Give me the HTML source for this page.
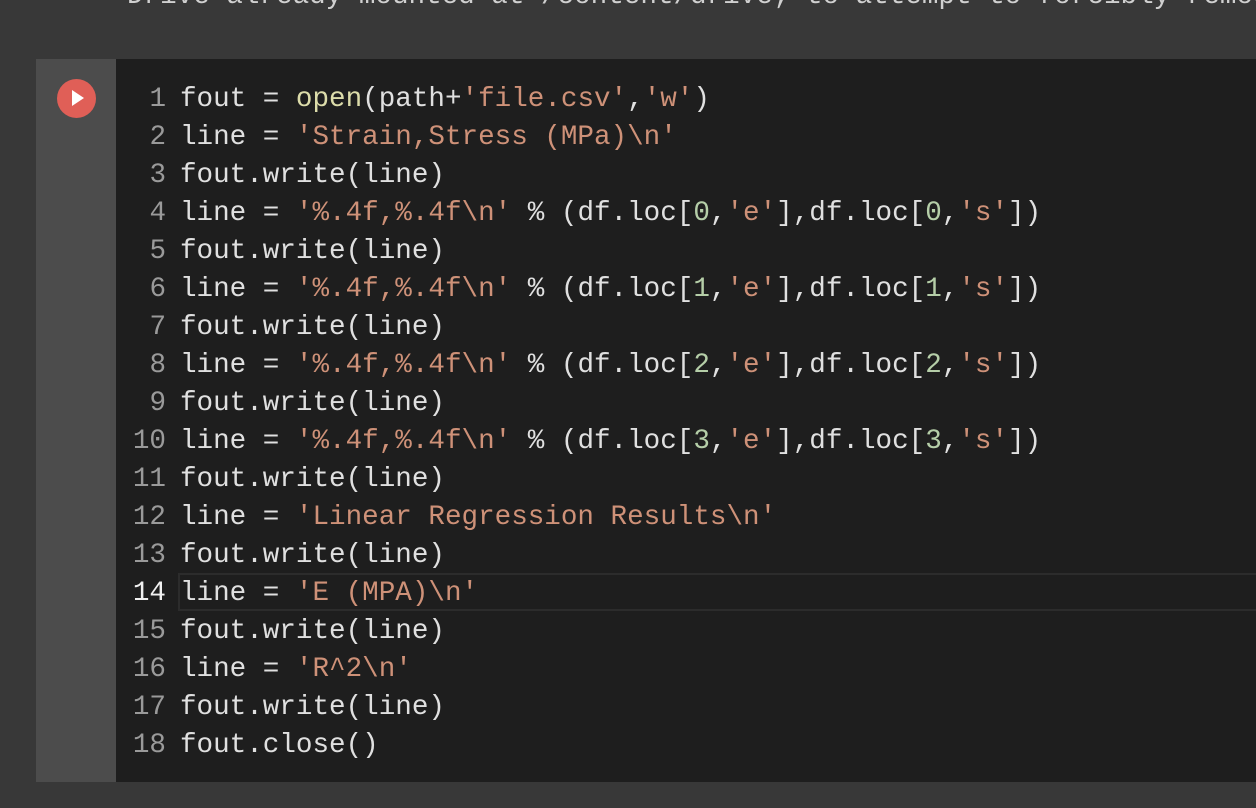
<!DOCTYPE html>
<html><head><meta charset="utf-8"><style>
html,body{margin:0;padding:0;width:1256px;height:808px;overflow:hidden;background:#383838;}
.top{position:absolute;left:127px;top:-19px;font:27.6px "Liberation Mono",monospace;color:#d0d0d0;white-space:pre;}
.gut{position:absolute;left:36px;top:59px;width:80px;height:723px;background:#4c4c4c;}
.code{position:absolute;left:116px;top:59px;width:1140px;height:723px;background:#1e1e1e;}
.play{position:absolute;left:57px;top:79px;width:39px;height:39px;border-radius:50%;background:#e05f57;}
.play:after{content:"";position:absolute;left:15px;top:11px;border-left:12px solid #fff;border-top:8.5px solid transparent;border-bottom:8.5px solid transparent;}
.lines{position:absolute;left:116px;top:81px;font:27.6px "Liberation Mono",monospace;color:#e0e0e0;}
.l{height:38px;line-height:38px;position:relative;white-space:pre;}
.n{display:inline-block;width:50px;text-align:right;color:#9a9a9a;margin-right:14px;}
.cur .n{color:#f0f0f0}
.cur:before{content:"";position:absolute;left:62px;top:-2px;height:34px;border:2px solid #2c2c2c;width:1090px}
.s{color:#ce9178}.d{color:#b5cea8}.f{color:#dcdcaa}
</style></head><body>
<div class="top">Drive already mounted at /content/drive; to attempt to forcibly remount</div>
<div class="gut"></div><div class="code"></div>
<div class="play"></div>
<div class="lines"><div class="l"><span class="n">1</span>fout = <span class="f">open</span>(path+<span class="s">'file.csv'</span>,<span class="s">'w'</span>)</div><div class="l"><span class="n">2</span>line = <span class="s">'Strain,Stress (MPa)\n'</span></div><div class="l"><span class="n">3</span>fout.write(line)</div><div class="l"><span class="n">4</span>line = <span class="s">'%.4f,%.4f\n'</span> % (df.loc[<span class="d">0</span>,<span class="s">'e'</span>],df.loc[<span class="d">0</span>,<span class="s">'s'</span>])</div><div class="l"><span class="n">5</span>fout.write(line)</div><div class="l"><span class="n">6</span>line = <span class="s">'%.4f,%.4f\n'</span> % (df.loc[<span class="d">1</span>,<span class="s">'e'</span>],df.loc[<span class="d">1</span>,<span class="s">'s'</span>])</div><div class="l"><span class="n">7</span>fout.write(line)</div><div class="l"><span class="n">8</span>line = <span class="s">'%.4f,%.4f\n'</span> % (df.loc[<span class="d">2</span>,<span class="s">'e'</span>],df.loc[<span class="d">2</span>,<span class="s">'s'</span>])</div><div class="l"><span class="n">9</span>fout.write(line)</div><div class="l"><span class="n">10</span>line = <span class="s">'%.4f,%.4f\n'</span> % (df.loc[<span class="d">3</span>,<span class="s">'e'</span>],df.loc[<span class="d">3</span>,<span class="s">'s'</span>])</div><div class="l"><span class="n">11</span>fout.write(line)</div><div class="l"><span class="n">12</span>line = <span class="s">'Linear Regression Results\n'</span></div><div class="l"><span class="n">13</span>fout.write(line)</div><div class="l cur"><span class="n">14</span>line = <span class="s">'E (MPA)\n'</span></div><div class="l"><span class="n">15</span>fout.write(line)</div><div class="l"><span class="n">16</span>line = <span class="s">'R^2\n'</span></div><div class="l"><span class="n">17</span>fout.write(line)</div><div class="l"><span class="n">18</span>fout.close()</div></div>
</body></html>
